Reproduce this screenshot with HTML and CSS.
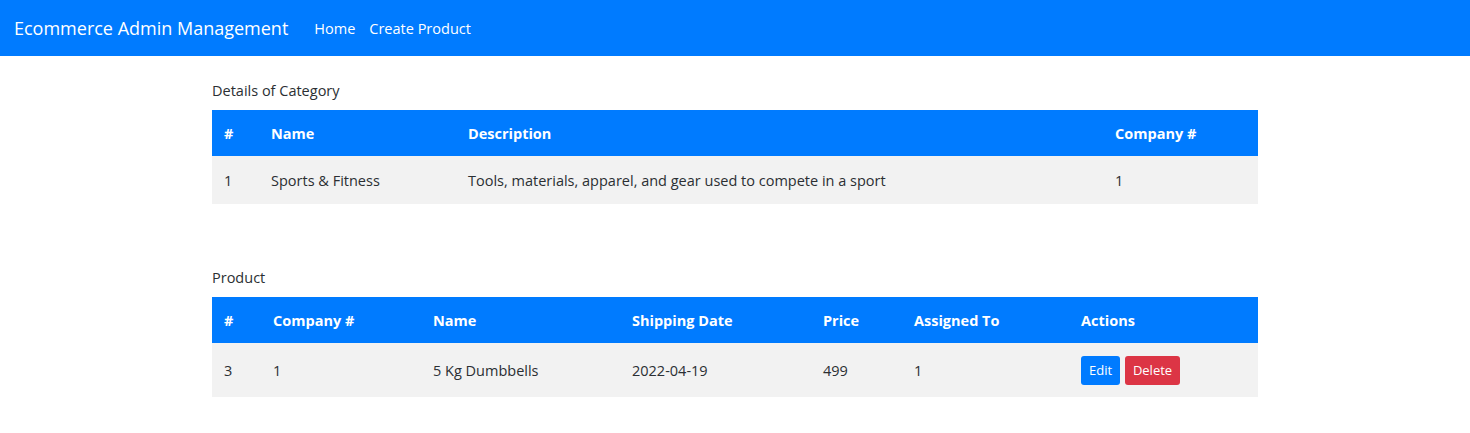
FILE: index.html
```html
<!DOCTYPE html>
<html>
<head>
  <title>Ecommerce Admin Management</title>
  <link rel="stylesheet" href="styles.css">
</head>
<body>
  <nav class="navbar">
    <a class="brand" href="#">Ecommerce Admin Management</a>
    <a class="nav-link" href="#">Home</a>
    <a class="nav-link" href="#">Create Product</a>
  </nav>

  <div class="container">
    <p class="table-caption">Details of Category</p>
    <table class="data-table">
      <thead>
        <tr>
          <th class="col-c1">#</th>
          <th class="col-c2">Name</th>
          <th class="col-c3">Description</th>
          <th class="col-c4">Company #</th>
        </tr>
      </thead>
      <tbody>
        <tr>
          <td>1</td>
          <td>Sports &amp; Fitness</td>
          <td>Tools, materials, apparel, and gear used to compete in a sport</td>
          <td>1</td>
        </tr>
      </tbody>
    </table>

    <p class="table-caption product-caption">Product</p>
    <table class="data-table">
      <thead>
        <tr>
          <th class="col-p1">#</th>
          <th class="col-p2">Company #</th>
          <th class="col-p3">Name</th>
          <th class="col-p4">Shipping Date</th>
          <th class="col-p5">Price</th>
          <th class="col-p6">Assigned To</th>
          <th class="col-p7">Actions</th>
        </tr>
      </thead>
      <tbody>
        <tr class="product-row">
          <td>3</td>
          <td>1</td>
          <td>5 Kg Dumbbells</td>
          <td>2022-04-19</td>
          <td>499</td>
          <td>1</td>
          <td>
            <button class="btn btn-edit">Edit</button>
            <button class="btn btn-delete">Delete</button>
          </td>
        </tr>
      </tbody>
    </table>
  </div>
</body>
</html>
```

FILE: styles.css
```css
body {
  margin: 0;
  font-family: 'Open Sans', 'Noto Sans', sans-serif;
  font-size: 14.5px;
  color: #2b2f33;
  background-color: #ffffff;
}
.navbar {
  display: flex;
  align-items: center;
  height: 56px;
  padding: 0 14px;
  background-color: #007bff;
}
.navbar a {
  color: #ffffff;
  text-decoration: none;
}
.brand {
  font-size: 18px;
  margin-right: 26px;
}
.nav-link {
  font-size: 14.5px;
  margin-right: 14px;
}
.container {
  width: 1046px;
  margin: 0 auto;
  padding-top: 25px;
}
.table-caption {
  margin: 0 0 9px;
  line-height: 20px;
}
.product-caption {
  margin-top: 64px;
}
.data-table {
  width: 100%;
  table-layout: fixed;
  border-collapse: collapse;
}
.data-table th {
  height: 46px;
  padding: 0 12px;
  text-align: left;
  font-weight: bold;
  color: #ffffff;
  background-color: #007bff;
}
.data-table td {
  height: 48px;
  padding: 0 12px;
  background-color: #f2f2f2;
}
.product-row td {
  height: 54px;
}
.col-c1 { width: 23px; }
.col-c2 { width: 173px; }
.col-c3 { width: 623px; }
.col-p1 { width: 25px; }
.col-p2 { width: 136px; }
.col-p3 { width: 175px; }
.col-p4 { width: 167px; }
.col-p5 { width: 67px; }
.col-p6 { width: 143px; }
.btn {
  font-family: inherit;
  font-size: 13px;
  line-height: 19px;
  padding: 5px 8px;
  border: none;
  border-radius: 3px;
  color: #ffffff;
  margin-right: 1px;
}
.btn-edit {
  background-color: #007bff;
}
.btn-delete {
  background-color: #dc3545;
}
```
